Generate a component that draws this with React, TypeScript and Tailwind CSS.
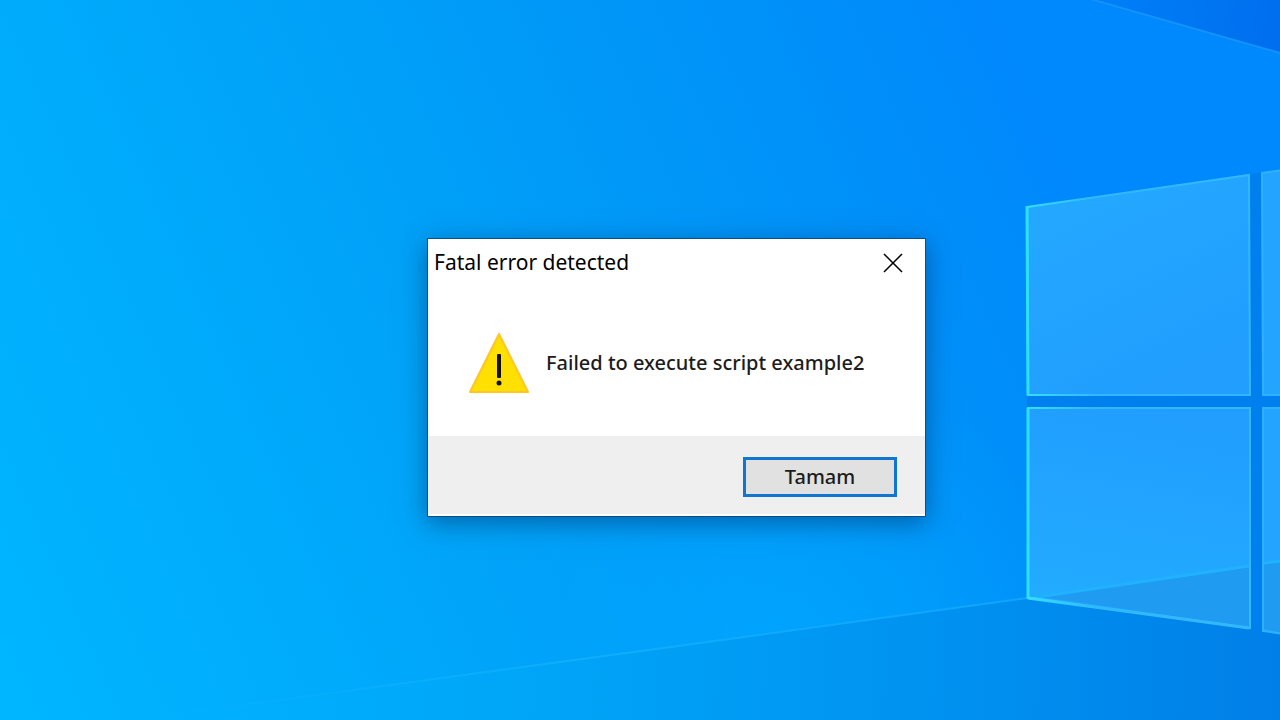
import { useState } from 'react';

function Wallpaper() {
  return (
    <svg
      className="absolute inset-0 h-full w-full"
      viewBox="0 0 1280 720"
      preserveAspectRatio="xMidYMid slice"
      aria-hidden="true"
    >
      <defs>
        <linearGradient id="sky" gradientUnits="userSpaceOnUse" x1="0" y1="680" x2="1080" y2="200">
          <stop offset="0" stopColor="#00b6ff" />
          <stop offset="0.2" stopColor="#00adfd" />
          <stop offset="0.45" stopColor="#00a2f8" />
          <stop offset="0.7" stopColor="#0096f8" />
          <stop offset="0.92" stopColor="#008cfa" />
          <stop offset="1" stopColor="#0088fd" />
        </linearGradient>
        <linearGradient id="floor" gradientUnits="userSpaceOnUse" x1="140" y1="680" x2="1280" y2="720">
          <stop offset="0" stopColor="#00b2ff" />
          <stop offset="0.35" stopColor="#00a5f8" />
          <stop offset="0.7" stopColor="#0092f0" />
          <stop offset="1" stopColor="#007fe8" />
        </linearGradient>
        <linearGradient id="corner" gradientUnits="userSpaceOnUse" x1="1100" y1="0" x2="1280" y2="20">
          <stop offset="0" stopColor="#0080f8" />
          <stop offset="1" stopColor="#006eee" />
        </linearGradient>
        <linearGradient id="beam" gradientUnits="userSpaceOnUse" x1="140" y1="0" x2="1026" y2="0">
          <stop offset="0" stopColor="#14b4ff" stopOpacity="0" />
          <stop offset="0.5" stopColor="#14b0ff" stopOpacity="0.8" />
          <stop offset="1" stopColor="#10a4ff" />
        </linearGradient>
        <linearGradient id="paneTop" x1="0" y1="0" x2="0.5" y2="1">
          <stop offset="0" stopColor="#24aaff" />
          <stop offset="1" stopColor="#219eff" />
        </linearGradient>
        <linearGradient id="paneBottom" x1="0.4" y1="0" x2="0.2" y2="1">
          <stop offset="0" stopColor="#219eff" />
          <stop offset="1" stopColor="#22adff" />
        </linearGradient>
        <linearGradient id="edge" gradientUnits="userSpaceOnUse" x1="1027" y1="0" x2="1250" y2="0">
          <stop offset="0" stopColor="#34e0ff" />
          <stop offset="0.3" stopColor="#30b8ff" />
          <stop offset="1" stopColor="#32b8ff" />
        </linearGradient>
        <radialGradient id="glow" gradientUnits="userSpaceOnUse" cx="780" cy="650" r="300">
          <stop offset="0" stopColor="#00a6ff" stopOpacity="0.8" />
          <stop offset="1" stopColor="#00a6ff" stopOpacity="0" />
        </radialGradient>
      </defs>

      <rect width="1280" height="720" fill="url(#sky)" />
      <rect width="1280" height="720" fill="url(#glow)" />
      <path d="M1090 0H1280V53Z" fill="url(#corner)" />
      <path d="M1090 -1L1280 53" stroke="#1293ff" strokeWidth="2" />
      <path d="M140 720L700 643L1027 598L1280 560V720Z" fill="url(#floor)" />
      <path d="M140 719L700 643L1027 598" stroke="url(#beam)" strokeWidth="2" fill="none" />

      {/* Gaps between the panes */}
      <path d="M1250 174L1262 172V632L1250 629Z" fill="#007fee" />
      <path d="M1027 396H1280V407H1027Z" fill="#007fee" />

      {/* Window panes */}
      <g stroke="url(#edge)" strokeWidth="2">
        <path d="M1027 207L1249 175L1250 395H1028Z" fill="url(#paneTop)" />
        <path d="M1262 173L1290 169V395H1263Z" fill="#22a4ff" stroke="#2eb2ff" />
        <path d="M1028 408H1250V628L1028 598Z" fill="url(#paneBottom)" />
        <path d="M1263 408H1290V635L1263 631Z" fill="#22a4ff" stroke="#2eb2ff" />
      </g>
      <path d="M1040 597L1249 566V627Z" fill="#209bf2" />
      <path d="M1264 564L1280 562V632L1264 629Z" fill="#209bf2" />
      <path d="M1030 598L1249 566M1264 563L1280 561" stroke="#20b2ff" strokeWidth="3" />
      <path d="M1028 598L1249 628" stroke="url(#edge)" strokeWidth="3" />
      <path d="M1027 206L1028 395M1028 408V599" stroke="#2ee0fc" strokeWidth="3" />
    </svg>
  );
}

function WarningIcon() {
  return (
    <svg className="shrink-0" width="62" height="62" viewBox="0 0 62 62" aria-hidden="true">
      <path d="M31 2L60 60H2Z" fill="#ffe000" stroke="#ffc526" strokeWidth="2" strokeLinejoin="round" />
      <rect x="29" y="22" width="4" height="24" rx="1" fill="#111" />
      <circle cx="31" cy="51" r="2.5" fill="#111" />
    </svg>
  );
}

export default function App() {
  const [open, setOpen] = useState(true);
  const close = () => setOpen(false);

  return (
    <main className="relative h-screen w-full overflow-hidden bg-[#0095f7] font-['Noto_Sans','Open_Sans',sans-serif] text-black">
      <Wallpaper />
      {open && (
        <div
          role="alertdialog"
          aria-labelledby="dialog-title"
          aria-describedby="dialog-message"
          className="absolute left-[427px] top-[238px] w-[499px] border border-[#0b4f85] bg-white shadow-[0_6px_24px_rgba(0,40,90,0.5)]"
        >
          <header className="flex h-12 items-center justify-between pl-[6px] pr-[22px]">
            <h1 id="dialog-title" className="text-[21px]">
              Fatal error detected
            </h1>
            <button type="button" aria-label="Close" onClick={close}>
              <svg width="20" height="20" viewBox="0 0 20 20" fill="none" stroke="#000" strokeWidth="1.5">
                <path d="M1 1L19 19M19 1L1 19" />
              </svg>
            </button>
          </header>

          <div className="flex h-[149px] items-center gap-4 px-10 pt-[2px]">
            <WarningIcon />
            <p id="dialog-message" className="whitespace-nowrap text-[20px] font-medium text-[#1c1c1c]">
              Failed to execute script example2
            </p>
          </div>

          <footer className="flex h-20 items-center justify-end border-b-2 border-white bg-[#efefef] px-7 pt-1">
            <button
              type="button"
              onClick={close}
              className="h-10 w-[154px] border-[3px] border-[#0f77d0] bg-[#e1e1e1] text-[20px] font-medium leading-none text-[#1c1c1c]"
            >
              Tamam
            </button>
          </footer>
        </div>
      )}
    </main>
  );
}
